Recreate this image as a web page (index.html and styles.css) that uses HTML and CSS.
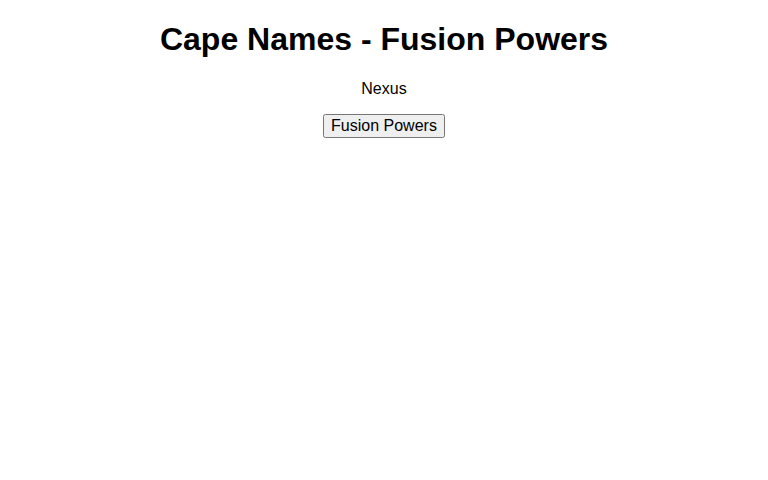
FILE: index.html
```html
<!DOCTYPE html>
<html lang="en">
<head>
  <meta charset="UTF-8" />
  <title>Cape Names - Fusion Powers</title>
  <link rel="stylesheet" href="styles.css">
</head>
<body>

  <h1>Cape Names - Fusion Powers</h1>

  <p id="capeName">Nexus</p>

  <button id="generate">Fusion Powers</button>

</body>
</html>
```

FILE: styles.css
```css
body {
  margin: 0;
  font-family: "Liberation Sans", Arial, sans-serif;
  text-align: center;
  color: #000;
  background: #fff;
}

#generate {
  font-family: "Liberation Sans", Arial, sans-serif;
  font-size: 16px;
}
```
